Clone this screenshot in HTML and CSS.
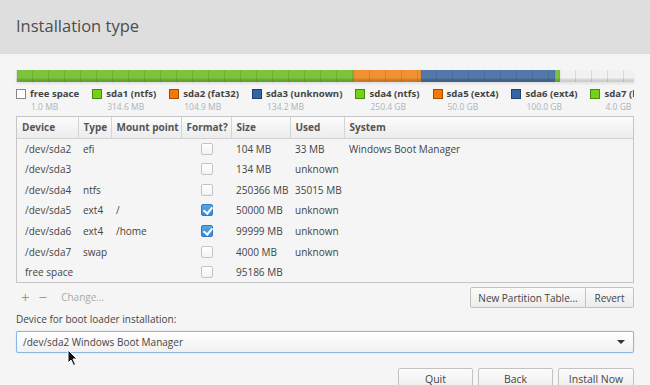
FILE: index.html
```html
<!DOCTYPE html>
<html lang="en">
<head>
    <meta charset="UTF-8">
    <title>Installation type</title>
    <link rel="stylesheet" href="styles.css">
</head>
<body>
    <div class="titlebar">
        <h1>Installation type</h1>
    </div>

    <div class="content">
        <div class="partbar">
            <div class="seg seg-free" style="flex-basis: 0.5px"></div>
            <div class="seg seg-green" style="flex-basis: 337px"></div>
            <div class="seg seg-orange" style="flex-basis: 67px"></div>
            <div class="seg seg-blue" style="flex-basis: 134px"></div>
            <div class="seg seg-green" style="flex-basis: 5px"></div>
            <div class="seg seg-free" style="flex-basis: 75px"></div>
        </div>

        <div class="legend">
            <div class="legend-item">
                <span class="swatch sw-free"></span>
                <div><b>free space</b><small>1.0 MB</small></div>
            </div>
            <div class="legend-item">
                <span class="swatch sw-green"></span>
                <div><b>sda1 (ntfs)</b><small>314.6 MB</small></div>
            </div>
            <div class="legend-item">
                <span class="swatch sw-orange"></span>
                <div><b>sda2 (fat32)</b><small>104.9 MB</small></div>
            </div>
            <div class="legend-item">
                <span class="swatch sw-blue"></span>
                <div><b>sda3 (unknown)</b><small>134.2 MB</small></div>
            </div>
            <div class="legend-item">
                <span class="swatch sw-green"></span>
                <div><b>sda4 (ntfs)</b><small>250.4 GB</small></div>
            </div>
            <div class="legend-item">
                <span class="swatch sw-orange"></span>
                <div><b>sda5 (ext4)</b><small>50.0 GB</small></div>
            </div>
            <div class="legend-item">
                <span class="swatch sw-blue"></span>
                <div><b>sda6 (ext4)</b><small>100.0 GB</small></div>
            </div>
            <div class="legend-item">
                <span class="swatch sw-green"></span>
                <div><b>sda7 (linux-swap)</b><small>4.0 GB</small></div>
            </div>
        </div>

        <div class="table-wrap">
            <table class="parts">
                <thead>
                    <tr>
                        <th class="c-dev">Device</th>
                        <th class="c-type">Type</th>
                        <th class="c-mount">Mount point</th>
                        <th class="c-fmt">Format?</th>
                        <th class="c-size">Size</th>
                        <th class="c-used">Used</th>
                        <th>System</th>
                    </tr>
                </thead>
                <tbody>
                    <tr><td>/dev/sda2</td><td>efi</td><td></td><td class="chk"><span class="box"></span></td><td>104 MB</td><td>33 MB</td><td>Windows Boot Manager</td></tr>
                    <tr><td>/dev/sda3</td><td></td><td></td><td class="chk"><span class="box"></span></td><td>134 MB</td><td>unknown</td><td></td></tr>
                    <tr><td>/dev/sda4</td><td>ntfs</td><td></td><td class="chk"><span class="box"></span></td><td>250366 MB</td><td>35015 MB</td><td></td></tr>
                    <tr><td>/dev/sda5</td><td>ext4</td><td>/</td><td class="chk"><span class="box checked"></span></td><td>50000 MB</td><td>unknown</td><td></td></tr>
                    <tr><td>/dev/sda6</td><td>ext4</td><td>/home</td><td class="chk"><span class="box checked"></span></td><td>99999 MB</td><td>unknown</td><td></td></tr>
                    <tr><td>/dev/sda7</td><td>swap</td><td></td><td class="chk"><span class="box"></span></td><td>4000 MB</td><td>unknown</td><td></td></tr>
                    <tr><td>free space</td><td></td><td></td><td class="chk"><span class="box"></span></td><td>95186 MB</td><td></td><td></td></tr>
                </tbody>
            </table>
        </div>

        <div class="toolbar">
            <div class="tools">
                <span class="tool">+</span>
                <span class="tool">&minus;</span>
                <span class="tool change">Change...</span>
            </div>
            <div class="linked">
                <button class="btn">New Partition Table...</button>
                <button class="btn">Revert</button>
            </div>
        </div>

        <label class="boot-label">Device for boot loader installation:</label>
        <div class="combo">
            <span>/dev/sda2 Windows Boot Manager</span>
            <span class="arrow"></span>
        </div>

        <div class="actions">
            <button class="btn big">Quit</button>
            <button class="btn big">Back</button>
            <button class="btn big">Install Now</button>
        </div>
    </div>

    <svg class="cursor" width="12" height="18" viewBox="0 0 12 18">
        <path d="M1 1 L1 14 L4 11 L6.5 16.5 L8.5 15.5 L6 10 L10 10 Z" fill="#111" stroke="#fff" stroke-width="1"/>
    </svg>
</body>
</html>
```

FILE: styles.css
```css
* {
    margin: 0;
    padding: 0;
    box-sizing: border-box;
}

body {
    font-family: 'Open Sans', 'DejaVu Sans', sans-serif;
    font-size: 10px;
    color: #333;
    background: #f5f5f5;
    width: 650px;
    height: 385px;
    overflow: hidden;
    position: relative;
}

.titlebar {
    height: 54px;
    background: #dedede;
    padding: 15px 16px 0;
}

.titlebar h1 {
    font-weight: normal;
    font-size: 16.5px;
    color: #4d4d4d;
    line-height: 22px;
}

.content {
    padding: 0 16px;
}

/* partition bar */
.partbar {
    display: flex;
    height: 12px;
    margin-top: 16px;
    border-radius: 1px;
    overflow: hidden;
    box-shadow: 0 2px 2px rgba(0,0,0,0.08);
}

.seg {
    flex-grow: 0;
    flex-shrink: 0;
    height: 100%;
    background-image: repeating-linear-gradient(90deg, transparent 0, transparent 15px, rgba(0,0,0,0.1) 15px, rgba(0,0,0,0.1) 16px);
}

.seg-green {
    background-color: #7bc43c;
    box-shadow: inset 0 -3px 2px rgba(0,0,0,0.18);
}

.seg-orange {
    background-color: #f19232;
    box-shadow: inset 0 -3px 2px rgba(0,0,0,0.18);
}

.seg-blue {
    background-color: #5279aa;
    box-shadow: inset 0 -3px 2px rgba(0,0,0,0.2);
}

.seg-free {
    background-color: #f2f2f2;
    box-shadow: inset 0 -3px 2px rgba(0,0,0,0.15);
}

/* legend */
.legend {
    display: flex;
    gap: 13px;
    margin-top: 5px;
    white-space: nowrap;
    overflow: hidden;
    height: 25px;
}

.legend-item {
    display: flex;
    gap: 4px;
    flex-shrink: 0;
}

.swatch {
    width: 10px;
    height: 10px;
    margin-top: 2px;
    border: 1px solid rgba(0,0,0,0.35);
}

.sw-free { background: #fff; border-color: #888; }
.sw-green { background: #73d216; }
.sw-orange { background: #f57900; }
.sw-blue { background: #3465a4; }

.legend-item b {
    display: block;
    font-size: 9.6px;
    color: #444;
    line-height: 14px;
}

.legend-item small {
    display: block;
    font-size: 8.5px;
    color: #aab4bb;
    padding-left: 1px;
    line-height: 11px;
}

/* table */
.table-wrap {
    margin-top: 4px;
    border: 1px solid #c6c6c6;
    height: 167px;
}

.parts {
    width: 100%;
    border-collapse: collapse;
    table-layout: fixed;
}

.parts th {
    height: 21px;
    text-align: left;
    font-weight: bold;
    color: #555;
    padding-left: 5px;
    white-space: nowrap;
    background: linear-gradient(#fbfbfb, #ececec);
    border-bottom: 1px solid #d0d0d0;
    border-left: 1px solid #d4d4d4;
}

.parts th:first-child {
    border-left: none;
}

.c-dev { width: 61px; }
.c-type { width: 33px; }
.c-mount { width: 70px; }
.c-fmt { width: 50px; }
.c-size { width: 59px; }
.c-used { width: 54px; }

.parts td {
    height: 20.7px;
    padding-left: 5px;
    color: #444;
    white-space: nowrap;
    overflow: visible;
}

.parts td:first-child {
    padding-left: 8px;
}

.parts td.chk {
    padding-left: 20px;
}

.box {
    display: block;
    width: 12px;
    height: 12px;
    border: 1px solid #c4c4c4;
    border-radius: 2px;
    background: linear-gradient(#ffffff, #f3f3f3);
    position: relative;
}

.box.checked {
    border-color: #2f7cc4;
    background: linear-gradient(#57a6e6, #3a8ad6);
}

.box.checked::after {
    content: "";
    position: absolute;
    left: 3px;
    top: 0px;
    width: 4px;
    height: 7px;
    border: solid #fff;
    border-width: 0 2px 2px 0;
    transform: rotate(40deg);
}

/* toolbar under table */
.toolbar {
    display: flex;
    justify-content: space-between;
    align-items: center;
    margin-top: 4px;
    height: 21px;
}

.tools {
    display: flex;
    align-items: center;
    gap: 9px;
    padding-left: 5px;
    color: #999;
}

.tool {
    font-size: 15px;
    line-height: 15px;
}

.tool.change {
    font-size: 10px;
    color: #aaa;
    margin-left: 5px;
}

.linked {
    display: flex;
}

.btn {
    font-family: inherit;
    font-size: 10px;
    color: #444;
    height: 21px;
    padding: 0;
    white-space: nowrap;
    border: 1px solid #c2c2c2;
    border-radius: 2px;
    background: linear-gradient(#fbfbfb, #ececec);
}

.linked .btn:first-child {
    width: 116px;
    border-radius: 2px 0 0 2px;
}

.linked .btn:last-child {
    width: 48px;
    border-left: none;
    border-radius: 0 2px 2px 0;
}

/* boot loader */
.boot-label {
    display: block;
    margin-top: 2px;
    line-height: 18px;
    color: #444;
}

.combo {
    margin-top: 3px;
    height: 22px;
    border: 1px solid #86b8e4;
    border-radius: 2px;
    background: linear-gradient(#ffffff, #f1f1f1);
    display: flex;
    align-items: center;
    justify-content: space-between;
    padding: 0 8px 0 6px;
    color: #444;
    box-shadow: 0 0 1px rgba(80,150,220,0.5);
}

.arrow {
    width: 0;
    height: 0;
    border-left: 4px solid transparent;
    border-right: 4px solid transparent;
    border-top: 4px solid #333;
}

.actions {
    display: flex;
    justify-content: flex-end;
    gap: 5px;
    margin-top: 15px;
}

.btn.big {
    height: 26px;
    padding-bottom: 4px;
    font-size: 10.5px;
}

.actions .btn:nth-child(1) { width: 75px; }
.actions .btn:nth-child(2) { width: 75px; }
.actions .btn:nth-child(3) { width: 76px; }

.cursor {
    position: absolute;
    left: 67px;
    top: 349px;
}
```
